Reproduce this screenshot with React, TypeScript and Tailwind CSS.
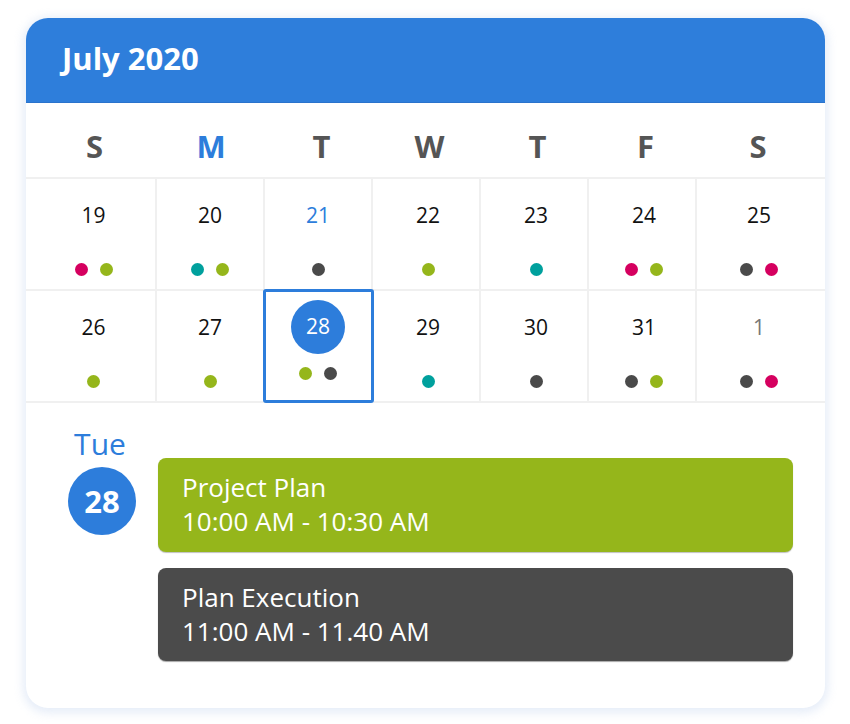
import React from "react";

const C = {
  pink: "bg-[#d5005f]",
  green: "bg-[#95b61b]",
  teal: "bg-[#00a09d]",
  dark: "bg-[#4a4a4a]",
};

type Day = { n: string; dots: string[]; cls?: string; selected?: boolean };

const rows: Day[][] = [
  [
    { n: "19", dots: [C.pink, C.green] },
    { n: "20", dots: [C.teal, C.green] },
    { n: "21", dots: [C.dark], cls: "text-[#2d7ddb]" },
    { n: "22", dots: [C.green] },
    { n: "23", dots: [C.teal] },
    { n: "24", dots: [C.pink, C.green] },
    { n: "25", dots: [C.dark, C.pink] },
  ],
  [
    { n: "26", dots: [C.green] },
    { n: "27", dots: [C.green] },
    { n: "28", dots: [C.green, C.dark], selected: true },
    { n: "29", dots: [C.teal] },
    { n: "30", dots: [C.dark] },
    { n: "31", dots: [C.dark, C.green] },
    { n: "1", dots: [C.dark, C.pink], cls: "text-[#777777]" },
  ],
];

const days = ["S", "M", "T", "W", "T", "F", "S"];
const grid = "grid grid-cols-[131px_108px_108px_108px_108px_108px_128px]";

export default function App() {
  return (
    <div className="min-h-[724px] w-[850px] bg-white pt-[18px] pl-[26px]" style={{ fontFamily: '"Open Sans", "Liberation Sans", sans-serif' }}>
      <div className="flex h-[690px] w-[799px] flex-col overflow-hidden rounded-[22px] bg-white shadow-[0_2px_10px_3px_rgba(200,215,240,0.45)]">
        <div className="flex h-[85px] items-center bg-[#2e7edb] pl-[36px] pb-[4px] border-b border-[#2a73cc]">
          <span className="text-[31px] font-bold text-white leading-none">July 2020</span>
        </div>
        <div className={`${grid} h-[76px] items-center border-b-2 border-[#f0f0f0] pt-[12px]`}>
          {days.map((d, i) => (
            <div key={i} className={`text-center text-[31px] font-bold leading-none ${i === 1 ? "text-[#2d7ddb]" : "text-[#555555]"} ${i === 0 ? "pl-[6px]" : ""} ${i >= 2 && i <= 5 ? "pl-[5px]" : ""} ${i === 6 ? "pr-[6px]" : ""}`}>
              {d}
            </div>
          ))}
        </div>
        {rows.map((r, ri) => (
          <div key={ri} className={`${grid} h-[112px] border-b-2 border-[#f0f0f0]`}>
            {r.map((d, i) => (
              <div key={i} className={`relative flex flex-col items-center ${i < 6 ? "border-r-2 border-[#f0f0f0]" : ""} ${i === 0 ? "pl-[6px]" : ""} ${i >= 3 && i <= 5 ? "pl-[4px]" : ""} ${i === 6 ? "pr-[4px]" : ""}`}>
                {d.selected && (
                  <div className="absolute left-[-2px] top-[-2px] h-[114px] w-[111px] rounded-[3px] border-[3px] border-[#2d7ddb]" />
                )}
                {d.selected ? (
                  <div className="mt-[9px] flex h-[54px] w-[54px] items-center justify-center rounded-full bg-[#2d7ddb] text-[21px] text-white">
                    {d.n}
                  </div>
                ) : (
                  <div className={`mt-[22px] h-[28px] text-[21px] leading-[28px] ${d.cls ?? "text-[#111111]"}`}>{d.n}</div>
                )}
                <div className={`flex gap-[12px] ${d.selected ? "mt-[13px]" : "mt-[34px]"}`}>
                  {d.dots.map((c, k) => (
                    <span key={k} className={`h-[13px] w-[13px] rounded-full ${c}`} />
                  ))}
                </div>
              </div>
            ))}
          </div>
        ))}
        <div className="flex pt-[25px] pl-[42px]">
          <div className="flex w-[68px] flex-col items-center">
            <div className="mr-[4px] h-[32px] text-[30px] leading-[32px] text-[#2d7ddb]">Tue</div>
            <div className="mt-[7px] flex h-[68px] w-[68px] items-center justify-center rounded-full bg-[#2d7ddb] text-[31px] font-bold text-white">
              28
            </div>
          </div>
          <div className="ml-[22px] mt-[30px] flex w-[635px] flex-col gap-[16px]">
            <div className="h-[94px] rounded-[8px] bg-[#95b61b] px-[24px] pt-[12px] text-[26px] leading-[34px] text-white shadow-[0_1px_1px_rgba(0,0,0,0.25)]">
              <div>Project Plan</div>
              <div>10:00 AM - 10:30 AM</div>
            </div>
            <div className="h-[93px] rounded-[8px] bg-[#4b4b4b] px-[24px] pt-[12px] text-[26px] leading-[34px] text-white shadow-[0_1px_1px_rgba(0,0,0,0.35)]">
              <div>Plan Execution</div>
              <div>11:00 AM - 11.40 AM</div>
            </div>
          </div>
        </div>
      </div>
    </div>
  );
}
